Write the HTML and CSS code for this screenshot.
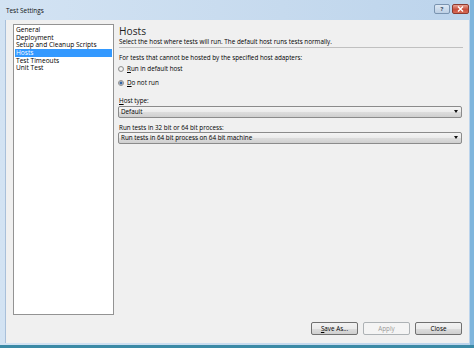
FILE: index.html
```html
<!DOCTYPE html>
<html lang="en">
<head>
    <meta charset="UTF-8">
    <title>Test Settings</title>
    <link rel="stylesheet" href="styles.css">
</head>
<body>
    <div class="window">
        <div class="titlebar">
            <span class="title">Test Settings</span>
            <div class="caption-buttons">
                <span class="cap-btn help">?</span>
                <span class="cap-btn close">
                    <svg width="7" height="6" viewBox="0 0 7 6"><path d="M1 0.5 L6 5.5 M6 0.5 L1 5.5" stroke="#fff" stroke-width="1.4"/></svg>
                </span>
            </div>
        </div>
        <div class="client">
            <div class="main">
                <ul class="nav-list">
                    <li>General</li>
                    <li>Deployment</li>
                    <li>Setup and Cleanup Scripts</li>
                    <li class="selected">Hosts</li>
                    <li>Test Timeouts</li>
                    <li>Unit Test</li>
                </ul>
                <div class="pane">
                    <h1>Hosts</h1>
                    <p class="subtitle">Select the host where tests will run. The default host runs tests normally.</p>
                    <p class="label intro">For tests that cannot be hosted by the specified host adapters:</p>
                    <label class="radio"><span class="dot"></span><span><u>R</u>un in default host</span></label>
                    <label class="radio checked"><span class="dot"></span><span><u>D</u>o not run</span></label>
                    <p class="label field-label"><u>H</u>ost type:</p>
                    <div class="combo"><span>Default</span><span class="arrow"></span></div>
                    <p class="label field-label">Run tests in 32 bit or 64 bit process:</p>
                    <div class="combo"><span>Run tests in 64 bit process on 64 bit machine</span><span class="arrow"></span></div>
                </div>
            </div>
            <div class="buttons">
                <button><u>S</u>ave As...</button>
                <button disabled>Apply</button>
                <button>Close</button>
            </div>
        </div>
    </div>
</body>
</html>
```

FILE: styles.css
```css
body {
    margin: 0;
    font-family: "Open Sans", "Noto Sans", sans-serif;
    font-size: 6.3px;
    color: #000;
    background-color: #3b8aa6;
}

.window {
    height: 345px;
    display: flex;
    flex-direction: column;
    background: linear-gradient(to right, #d3e3f3 0%, #c6daee 60%, #bcd4ec 100%);
    border-right: 4px solid #7fb6dc;
    box-sizing: border-box;
    padding: 0 1px 2px 5px;
}

.titlebar {
    height: 20px;
    display: flex;
    align-items: flex-start;
    justify-content: space-between;
    flex-shrink: 0;
}

.title {
    margin-top: 6px;
    margin-left: 1px;
    font-size: 6.4px;
    color: #111;
}

.caption-buttons {
    display: flex;
    gap: 2px;
    margin-top: 4px;
}

.cap-btn {
    height: 10px;
    display: flex;
    align-items: center;
    justify-content: center;
    border: 1px solid #7a94b0;
    border-radius: 2px;
    box-sizing: border-box;
}

.help {
    width: 16px;
    background: linear-gradient(#dde8f4, #bccfe4);
    font-size: 6px;
    color: #3b4e66;
    font-weight: bold;
}

.close {
    width: 17px;
    background: linear-gradient(#e8a294, #c94d3c 55%, #d66a55);
    border-color: #8d3a30;
}

.client {
    flex: 1;
    background-color: #f0f0f0;
    display: flex;
    flex-direction: column;
    padding: 4px 6px 8px 7px;
    border-left: 1px solid #a9c0da;
}

.main {
    flex: 1;
    display: flex;
    gap: 4px;
}

.nav-list {
    list-style: none;
    margin: 0;
    padding: 1px;
    width: 101px;
    height: 291px;
    box-sizing: border-box;
    background-color: #fff;
    border: 1px solid #939393;
    font-size: 6.6px;
}

.nav-list li {
    height: 7.7px;
    line-height: 7.7px;
    padding-left: 1px;
    white-space: nowrap;
}

.nav-list li.selected {
    background-color: #3399ff;
    color: #fff;
}

.pane {
    flex: 1;
}

.pane h1 {
    margin: 0 0 0 1px;
    font-size: 10.2px;
    font-weight: normal;
    line-height: 14px;
    color: #1e1e1e;
}

.subtitle {
    margin: 0 0 0 1px;
    line-height: 8.6px;
    border-bottom: 1px solid #c0c0c0;
}

.label {
    margin: 0 0 0 1px;
    line-height: 8px;
}

.intro {
    margin-top: 6px;
}

.radio {
    display: flex;
    align-items: center;
    gap: 3px;
    height: 8px;
    margin-top: 3px;
}

.radio + .radio {
    margin-top: 6px;
}

.dot {
    width: 6px;
    height: 6px;
    border-radius: 50%;
    border: 1px solid #8e8f8f;
    background: radial-gradient(#fff, #d8d8d8);
    box-sizing: border-box;
}

.radio.checked .dot {
    background: radial-gradient(#3a6fb0 0, #2e5f9f 1.2px, #dcdcdc 1.8px);
}

.field-label {
    margin-top: 10px;
}

.combo + .field-label {
    margin-top: 6px;
}

.combo {
    height: 12px;
    margin-top: 1px;
    margin-right: 1px;
    display: flex;
    align-items: center;
    justify-content: space-between;
    padding: 0 3px 0 2px;
    border: 1px solid #8b8b8b;
    border-radius: 2px;
    background: linear-gradient(#f4f4f4 0%, #ebebeb 50%, #dddddd 51%, #cfcfcf 100%);
    box-sizing: border-box;
}

.field-label + .combo + .field-label + .combo {
    margin-top: 0;
}

.arrow {
    width: 0;
    height: 0;
    border-left: 2px solid transparent;
    border-right: 2px solid transparent;
    border-top: 3px solid #111;
}

.buttons {
    display: flex;
    justify-content: flex-end;
    gap: 5px;
    padding-top: 7px;
    padding-right: 1px;
}

button {
    width: 47px;
    height: 13px;
    padding: 0;
    font-family: inherit;
    font-size: 6.3px;
    color: #000;
    border: 1px solid #707070;
    border-radius: 2px;
    background: linear-gradient(#f2f2f2 0%, #ebebeb 50%, #dddddd 51%, #cfcfcf 100%);
}

button:disabled {
    color: #9a9a9a;
    border-color: #adb2b5;
    background: #f4f4f4;
}
```
